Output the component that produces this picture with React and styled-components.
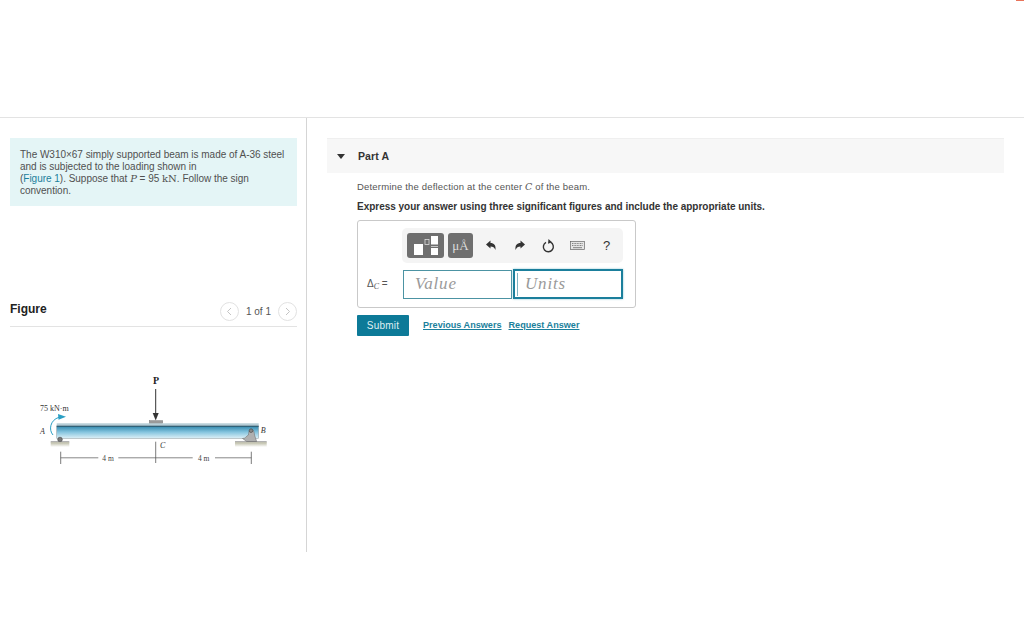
import React from 'react';
import styled, { createGlobalStyle } from 'styled-components';

const GlobalStyle = createGlobalStyle`
  html, body {
    margin: 0;
    padding: 0;
    background: #fff;
    font-family: "Liberation Sans", Arial, sans-serif;
    color: #3a3a3a;
  }
`;

const Page = styled.div`
  position: relative;
  width: 1024px;
  height: 632px;
  overflow: hidden;
  background: #fff;
`;

const CornerMark = styled.div`
  position: absolute;
  top: 0;
  right: 0;
  width: 8px;
  height: 1px;
  background: #e8735a;
`;

const TopBar = styled.div`
  height: 117px;
  border-bottom: 1px solid #e3e3e3;
`;

const Columns = styled.div`
  display: flex;
  align-items: flex-start;
`;

const LeftPane = styled.div`
  box-sizing: border-box;
  width: 307px;
  height: 434px;
  padding: 20px 9px 0 10px;
  border-right: 1px solid #d5d5d5;
`;

const Intro = styled.div`
  box-sizing: border-box;
  height: 68px;
  padding: 11px 10px 0;
  background: #e4f5f6;
  font-size: 10px;
  line-height: 12px;
  letter-spacing: -0.02px;
  white-space: nowrap;
  color: #505050;
`;

const Link = styled.span`
  color: #1b7f9c;
`;

const MathVar = styled.span`
  font-family: "DejaVu Serif", "Liberation Serif", serif;
  font-style: ${(p) => (p.$upright ? 'normal' : 'italic')};
  letter-spacing: 0;
`;

const FigureHead = styled.div`
  display: flex;
  align-items: center;
  justify-content: space-between;
  height: 30px;
  margin-top: 88px;
  padding-bottom: 2px;
  border-bottom: 1px solid #e3e3e3;
`;

const FigureTitle = styled.div`
  font-size: 12px;
  font-weight: bold;
  color: #222;
`;

const Pager = styled.div`
  display: flex;
  align-items: center;
  gap: 7px;
  padding-top: 4px;
  font-size: 10px;
  color: #555;
`;

const PagerButton = styled.div`
  box-sizing: border-box;
  display: flex;
  align-items: center;
  justify-content: center;
  width: 19px;
  height: 19px;
  border: 1px solid #e2e2e2;
  border-radius: 50%;
`;

const FigureBody = styled.div`
  display: flex;
  justify-content: center;
  padding: 43px 0 0 2px;
`;

const RightPane = styled.div`
  box-sizing: border-box;
  width: 717px;
  padding: 20px 20px 0 20px;
`;

const PartHeader = styled.div`
  display: flex;
  align-items: center;
  gap: 13px;
  height: 35px;
  padding-left: 10px;
  background: #f7f7f7;
  border-top: 1px solid #efefef;
  box-sizing: border-box;
`;

const Caret = styled.div`
  width: 0;
  height: 0;
  border-left: 4px solid transparent;
  border-right: 4px solid transparent;
  border-top: 5px solid #333;
`;

const PartTitle = styled.div`
  padding-bottom: 1px;
  font-size: 10.5px;
  font-weight: bold;
  letter-spacing: 0.1px;
  color: #333;
`;

const PartBody = styled.div`
  padding: 7px 0 0 30px;
`;

const Question = styled.div`
  font-size: 9.5px;
  line-height: 14px;
  letter-spacing: 0.18px;
  color: #555;
`;

const Instruction = styled.div`
  margin-top: 6px;
  font-size: 10px;
  line-height: 14px;
  font-weight: bold;
  letter-spacing: -0.02px;
  color: #333;
`;

const AnswerBox = styled.div`
  box-sizing: border-box;
  width: 279px;
  height: 88px;
  margin-top: 6px;
  padding: 7px 12px 0 9px;
  border: 1px solid #c9c9c9;
  border-radius: 3px;
`;

const Toolbar = styled.div`
  box-sizing: border-box;
  display: flex;
  align-items: center;
  width: 221px;
  height: 35px;
  margin-left: 35px;
  padding-left: 5px;
  background: #f4f4f4;
  border-radius: 5px;
`;

const ToolGroup = styled.div`
  display: flex;
  flex-shrink: 0;
  align-items: center;
  justify-content: center;
  box-sizing: border-box;
  width: ${(p) => p.$w}px;
  height: 25px;
  margin-right: ${(p) => p.$gap || 0}px;
  background: #6f6f6f;
  border-radius: 3px;
  color: #ddd;
  font-family: "Liberation Serif", serif;
  font-size: 13px;
`;

const ToolIcon = styled.div`
  display: flex;
  flex-shrink: 0;
  align-items: center;
  justify-content: center;
  width: 29px;
  color: #333;
  font-size: 13px;
`;

const InputRow = styled.div`
  display: flex;
  align-items: center;
  margin-top: 6px;
`;

const Label = styled.div`
  width: 36px;
  box-sizing: border-box;
  font-size: 10px;
  color: #555;
  white-space: nowrap;
`;

const Sub = styled.sub`
  font-family: "Liberation Serif", serif;
  font-style: italic;
  font-size: 8px;
  vertical-align: -2px;
`;

const Field = styled.div`
  box-sizing: border-box;
  display: flex;
  align-items: center;
  gap: 7px;
  width: ${(p) => p.$w}px;
  height: ${(p) => (p.$focus ? 30 : 29)}px;
  padding-left: ${(p) => (p.$focus ? 2 : 11)}px;
  margin-left: ${(p) => (p.$focus ? 1 : 0)}px;
  border: 1px solid ${(p) => (p.$focus ? '#1b7f9c' : '#4c93a3')};
  border-width: ${(p) => (p.$focus ? '2px' : '1px')};
  box-shadow: ${(p) => (p.$focus ? '0 0 2px #8cc6d4' : 'none')};
  font-family: "Liberation Serif", serif;
  font-style: italic;
  font-size: 17px;
  letter-spacing: 0.8px;
  color: #9a9a9a;
`;

const TextCursor = styled.span`
  width: 1px;
  height: 23px;
  background: #7fb4c2;
`;

const Actions = styled.div`
  display: flex;
  align-items: center;
  margin-top: 7px;
`;

const SubmitButton = styled.div`
  display: flex;
  align-items: center;
  justify-content: center;
  width: 52px;
  height: 21px;
  background: #0d7a98;
  border-radius: 1px;
  color: #dfeef2;
  font-size: 10px;
  letter-spacing: 0.2px;
  margin-right: 14px;
`;

const ActionLink = styled.div`
  margin-right: 7px;
  padding-bottom: 2px;
  font-size: 9.1px;
  font-weight: bold;
  color: #1b7f9c;
  text-decoration: underline;
`;

const BeamDiagram = () => (
  <svg width="250" height="100" viewBox="0 0 250 100" fontFamily="Liberation Serif, serif">
    <defs>
      <linearGradient id="beam" x1="0" y1="0" x2="0" y2="1">
        <stop offset="0" stopColor="#2f86ab" />
        <stop offset="0.5" stopColor="#86c5df" />
        <stop offset="1" stopColor="#dceff6" />
      </linearGradient>
      <linearGradient id="ground" x1="0" y1="0" x2="0" y2="1">
        <stop offset="0" stopColor="#b8b8a0" />
        <stop offset="1" stopColor="#ffffff" />
      </linearGradient>
    </defs>
    <text x="126" y="14" fontSize="10" fontWeight="bold" textAnchor="middle" fill="#222">P</text>
    <line x1="125.700" y1="19" x2="125.700" y2="45" stroke="#333" strokeWidth="1" />
    <path d="M122.700 43 L128.700 43 L125.700 50.500 Z" fill="#333" />
    <rect x="119.300" y="50.700" width="13.400" height="2.800" fill="#999" stroke="#777" strokeWidth="0.5" />
    <text x="10" y="40.500" fontSize="8" fill="#333">75 kN·m</text>
    <path d="M23 65 C18.500 60 20 50 29 47.300" fill="none" stroke="#2b9fc4" strokeWidth="1" />
    <path d="M36 46.800 L28 44 L28.500 49.800 Z" fill="#2b9fc4" />
    <text x="10" y="64" fontSize="8" fontStyle="italic" fill="#333">A</text>
    <text x="230.700" y="63" fontSize="8" fontStyle="italic" fill="#333">B</text>
    <rect x="26.700" y="56" width="202" height="12.300" fill="url(#beam)" stroke="#9aa7ac" strokeWidth="0.6" />
    <rect x="26.700" y="53.300" width="202" height="2.700" fill="#b6cdd6" />
    <line x1="26.700" y1="56.200" x2="228.700" y2="56.200" stroke="#123a4d" strokeWidth="0.8" />
    <circle cx="30" cy="69.500" r="2.300" fill="#777" stroke="#444" strokeWidth="0.6" />
    <rect x="20.700" y="71.500" width="18.600" height="0.800" fill="#666" />
    <rect x="20.700" y="72.300" width="18.600" height="4.700" fill="url(#ground)" />
    <path d="M212.500 68.500 C216 68.500 216 66 218.500 65 C218.500 57 224 57 224.500 65 L226.700 71.500 L216.700 71.500 Z" fill="#b0b0b0" stroke="#666" strokeWidth="0.5" />
    <circle cx="221" cy="60.700" r="1.800" fill="#888" stroke="#444" strokeWidth="0.6" />
    <rect x="205" y="71.500" width="31.700" height="0.800" fill="#666" />
    <rect x="205" y="72.300" width="31.700" height="4.700" fill="url(#ground)" />
    <line x1="125.700" y1="71.700" x2="125.700" y2="93" stroke="#444" strokeWidth="0.7" />
    <text x="130" y="78" fontSize="8" fontStyle="italic" fill="#333">C</text>
    <line x1="30.700" y1="81.700" x2="30.700" y2="94" stroke="#444" strokeWidth="0.7" />
    <line x1="221.300" y1="81.700" x2="221.300" y2="94" stroke="#444" strokeWidth="0.7" />
    <line x1="30.700" y1="87.800" x2="68.300" y2="87.800" stroke="#555" strokeWidth="0.7" />
    <line x1="88.300" y1="87.800" x2="162.700" y2="87.800" stroke="#555" strokeWidth="0.7" />
    <line x1="185" y1="87.800" x2="221.300" y2="87.800" stroke="#555" strokeWidth="0.7" />
    <text x="78" y="90.500" fontSize="7.500" textAnchor="middle" fill="#444">4 m</text>
    <text x="173.700" y="90.500" fontSize="7.500" textAnchor="middle" fill="#444">4 m</text>
  </svg>
);

const TemplatesIcon = () => (
  <svg width="24" height="20" viewBox="0 0 24 20">
    <rect x="0" y="8" width="9" height="11" fill="#fff" />
    <rect x="11" y="3.500" width="4" height="5" fill="none" stroke="#ddd" strokeWidth="0.8" />
    <rect x="17" y="0" width="7" height="8.500" fill="#fff" />
    <rect x="17" y="10" width="7" height="0.800" fill="#ddd" />
    <rect x="17" y="12" width="7" height="7" fill="#fff" />
  </svg>
);

const UndoIcon = ({ flip }) => (
  <svg width="12" height="11" viewBox="0 0 12 11" style={flip ? { transform: 'scaleX(-1)' } : undefined}>
    <path d="M1 4.500 L5.500 0.500 L5.500 3 C9 3 11 5 10.500 10 C9.500 7.500 8 6.500 5.500 6.500 L5.500 8.500 Z" fill="#333" />
  </svg>
);

const ResetIcon = () => (
  <svg width="13" height="14" viewBox="0 0 13 14">
    <path d="M8.500 3.200 A5 5 0 1 1 4 3.300" fill="none" stroke="#333" strokeWidth="1.400" />
    <path d="M6.500 0 L10 3.200 L6 4.800 Z" fill="#333" />
  </svg>
);

const KeyboardIcon = () => (
  <svg width="15" height="9" viewBox="0 0 15 9">
    <rect x="0.500" y="0.500" width="14" height="8" fill="#e5e5e5" stroke="#666" strokeWidth="0.7" />
    <line x1="2" y1="2.500" x2="13" y2="2.500" stroke="#777" strokeWidth="0.9" strokeDasharray="1 0.6" />
    <line x1="2" y1="4.500" x2="13" y2="4.500" stroke="#777" strokeWidth="0.9" strokeDasharray="1 0.6" />
    <line x1="3" y1="6.700" x2="12" y2="6.700" stroke="#777" strokeWidth="0.9" />
  </svg>
);

const Chevron = ({ right }) => (
  <svg width="7" height="9" viewBox="0 0 7 9">
    <path d={right ? 'M2 1 L5.500 4.500 L2 8' : 'M5 1 L1.500 4.500 L5 8'} fill="none" stroke="#c4c4c4" strokeWidth="1" />
  </svg>
);

const App = () => (
  <Page>
    <GlobalStyle />
    <CornerMark />
    <TopBar />
    <Columns>
      <LeftPane>
        <Intro>
          The W310×67 simply supported beam is made of A-36 steel
          <br />
          and is subjected to the loading shown in
          <br />
          (<Link>Figure 1</Link>). Suppose that <MathVar>P</MathVar> = 95 <MathVar $upright>kN</MathVar>. Follow the sign
          <br />
          convention.
        </Intro>
        <FigureHead>
          <FigureTitle>Figure</FigureTitle>
          <Pager>
            <PagerButton><Chevron /></PagerButton>
            <span>1 of 1</span>
            <PagerButton><Chevron right /></PagerButton>
          </Pager>
        </FigureHead>
        <FigureBody>
          <BeamDiagram />
        </FigureBody>
      </LeftPane>
      <RightPane>
        <PartHeader>
          <Caret />
          <PartTitle>Part A</PartTitle>
        </PartHeader>
        <PartBody>
          <Question>
            Determine the deflection at the center <MathVar>C</MathVar> of the beam.
          </Question>
          <Instruction>Express your answer using three significant figures and include the appropriate units.</Instruction>
          <AnswerBox>
            <Toolbar>
              <ToolGroup $w={37} $gap={4}><TemplatesIcon /></ToolGroup>
              <ToolGroup $w={25} $gap={3}>μÅ</ToolGroup>
              <ToolIcon><UndoIcon /></ToolIcon>
              <ToolIcon><UndoIcon flip /></ToolIcon>
              <ToolIcon><ResetIcon /></ToolIcon>
              <ToolIcon><KeyboardIcon /></ToolIcon>
              <ToolIcon>?</ToolIcon>
            </Toolbar>
            <InputRow>
              <Label>Δ<Sub>C</Sub> =</Label>
              <Field $w={109}>Value</Field>
              <Field $w={110} $focus><TextCursor />Units</Field>
            </InputRow>
          </AnswerBox>
          <Actions>
            <SubmitButton>Submit</SubmitButton>
            <ActionLink>Previous Answers</ActionLink>
            <ActionLink>Request Answer</ActionLink>
          </Actions>
        </PartBody>
      </RightPane>
    </Columns>
  </Page>
);

export default App;
